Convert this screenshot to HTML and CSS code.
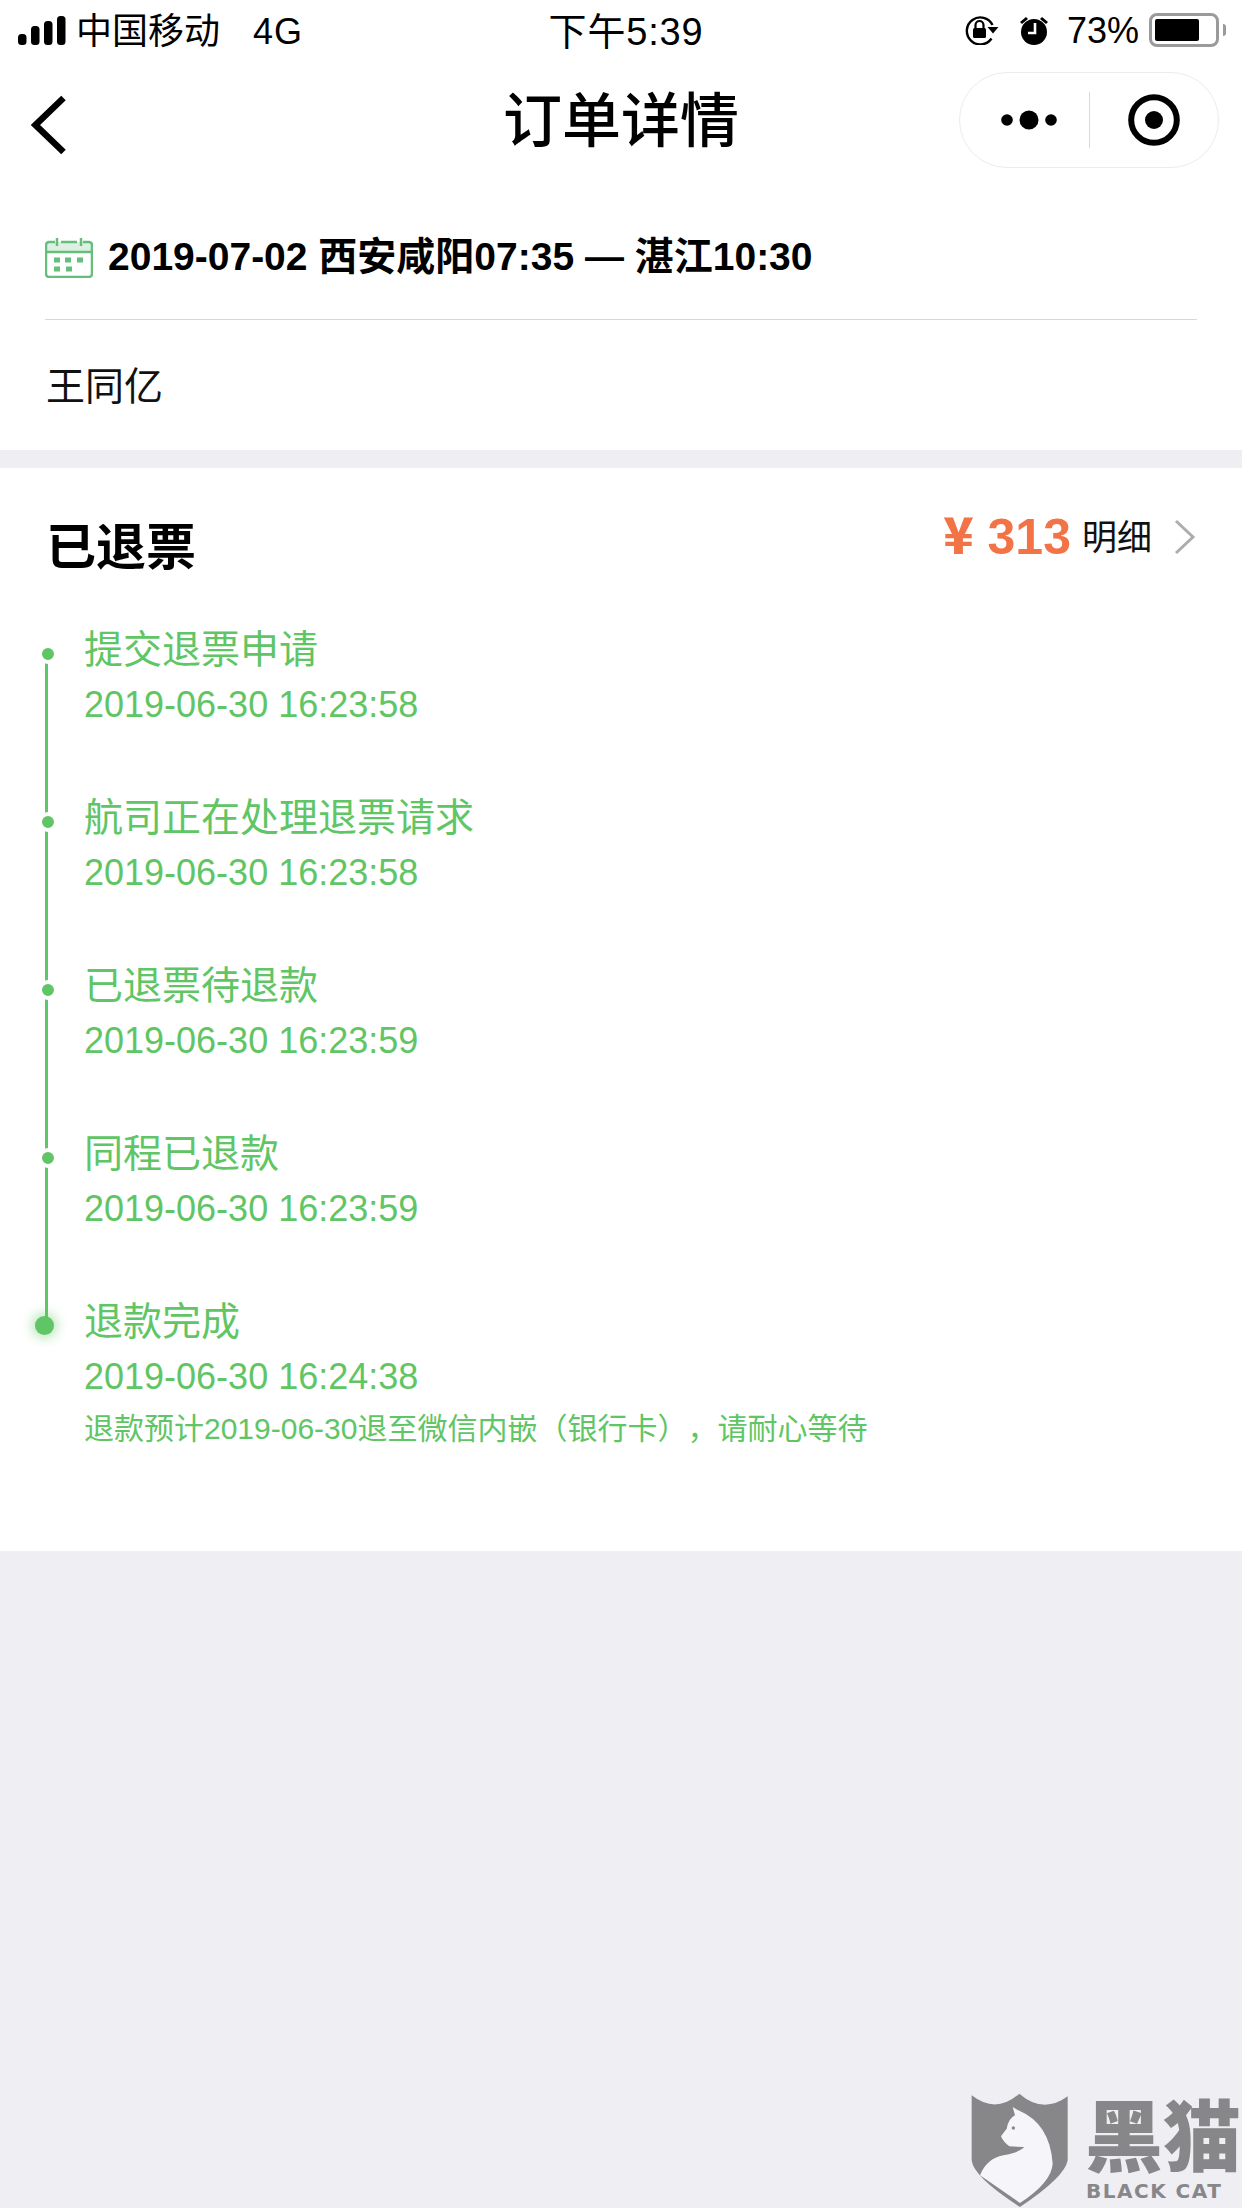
FILE: index.html
```html
<!DOCTYPE html>
<html lang="zh-CN">
<head>
<meta charset="utf-8">
<title>订单详情</title>
<link rel="stylesheet" href="styles.css">
</head>
<body>
<div class="phone">
  <header class="top">
    <div class="status">
      <div class="status-left">
        <svg class="signal" width="48" height="29" viewBox="0 0 48 29"><rect x="0" y="18" width="8.500" height="11" rx="3.500"/><rect x="13" y="10" width="8.500" height="19" rx="3.500"/><rect x="26" y="5" width="8.500" height="24" rx="3.500"/><rect x="39" y="0" width="8.500" height="29" rx="3.500"/></svg>
        <span class="carrier">中国移动</span>
        <span class="net">4G</span>
      </div>
      <div class="clock">下午5:39</div>
      <div class="status-right">
        <svg class="lock" width="34" height="30" viewBox="0 0 34 30"><path d="M26.500 23.500A13.500 13.500 0 1 1 27.500 10" fill="none" stroke="#000" stroke-width="2.400"/><path d="M22.500 12h11l-5.500 6.500z"/><rect x="8" y="13" width="13" height="10" rx="1.500"/><path d="M10.500 13.500V10a4 4 0 0 1 8 0v3.500" fill="none" stroke="#000" stroke-width="2.200"/></svg>
        <svg class="alarm" width="30" height="29" viewBox="0 0 30 29"><circle cx="15" cy="16" r="13"/><path d="M1 6l6-5 2 2-6 5zM29 6l-6-5-2 2 6 5z"/><path d="M16 7v10H9" fill="none" stroke="#fff" stroke-width="2.600"/></svg>
        <span class="pct">73%</span>
        <span class="battery"><span class="battery-fill"></span></span>
        <span class="battery-nub"></span>
      </div>
    </div>
    <nav class="nav">
      <div class="nav-left">
        <svg class="back" width="36" height="60" viewBox="0 0 36 60"><path d="M32.500 3L4.500 30l28 27" fill="none" stroke="#000" stroke-width="6.500"/></svg>
      </div>
      <h1 class="nav-title">订单详情</h1>
      <div class="nav-right">
        <div class="capsule">
          <div class="cap-cell cap-more">
            <svg width="56" height="20" viewBox="0 0 56 20"><circle cx="6" cy="10" r="5.800"/><circle cx="28" cy="10" r="9.500"/><circle cx="50" cy="10" r="5.800"/></svg>
          </div>
          <div class="cap-sep"></div>
          <div class="cap-cell">
            <svg width="52" height="52" viewBox="0 0 52 52"><circle cx="26" cy="26" r="22.800" fill="none" stroke="#000" stroke-width="6"/><circle cx="26" cy="26" r="9"/></svg>
          </div>
        </div>
      </div>
    </nav>
  </header>

  <section class="order">
    <div class="flight">
      <svg class="cal" width="48" height="40" viewBox="0 0 48 40"><path d="M1 14V7a3 3 0 0 1 3-3h40a3 3 0 0 1 3 3v7z" fill="#dcf1e1"/><path d="M10 4H4a3 3 0 0 0-3 3v29a3 3 0 0 0 3 3h40a3 3 0 0 0 3-3V7a3 3 0 0 0-3-3h-6M16 4h16M1 14h46M12 0v8M36 0v8" fill="none" stroke="#64be7c" stroke-width="2.500"/><g fill="#64be7c"><rect x="9" y="19.500" width="6" height="5"/><rect x="20" y="19.500" width="6" height="5"/><rect x="32" y="19.500" width="6" height="5"/><rect x="9" y="28.500" width="6" height="5"/><rect x="21" y="28.500" width="6" height="5"/></g></svg>
      <span class="flight-text">2019-07-02 西安咸阳07:35 — 湛江10:30</span>
    </div>
    <div class="passenger">王同亿</div>
  </section>

  <section class="refund">
    <div class="refund-head">
      <h2 class="refund-title">已退票</h2>
      <div class="price-box">
        <span class="price"><span class="yen">¥</span> 313</span>
        <span class="detail">明细</span>
        <svg class="chev" width="22" height="36" viewBox="0 0 22 36"><path d="M2 2l17 16L2 34" fill="none" stroke="#adadad" stroke-width="3"/></svg>
      </div>
    </div>
    <ol class="timeline">
      <li class="step">
        <div class="step-title">提交退票申请</div>
        <div class="step-time">2019-06-30 16:23:58</div>
      </li>
      <li class="step">
        <div class="step-title">航司正在处理退票请求</div>
        <div class="step-time">2019-06-30 16:23:58</div>
      </li>
      <li class="step">
        <div class="step-title">已退票待退款</div>
        <div class="step-time">2019-06-30 16:23:59</div>
      </li>
      <li class="step">
        <div class="step-title">同程已退款</div>
        <div class="step-time">2019-06-30 16:23:59</div>
      </li>
      <li class="step step-last">
        <div class="step-title">退款完成</div>
        <div class="step-time">2019-06-30 16:24:38</div>
        <div class="step-note">退款预计2019-06-30退至微信内嵌（银行卡），请耐心等待</div>
      </li>
    </ol>
  </section>

  <div class="watermark">
    <svg class="shield" width="100" height="116" viewBox="90 95 300 348"><path d="M95 105Q168 162 238 100Q310 162 383 108V300Q375 350 240 440Q100 350 95 300Z" fill="#87878a"/><path d="M218 140L235 150Q330 190 338 310Q335 365 240 428L120 345Q140 295 190 285Q240 275 253 260L208 258Q190 245 183 228L200 205Q205 175 225 165Z" fill="#f6f6fa"/><circle cx="220" cy="203" r="5" fill="#87878a"/></svg>
    <div class="wm-text">
      <div class="wm-cn">黑猫</div>
      <div class="wm-en">BLACK CAT</div>
    </div>
  </div>
</div>
</body>
</html>
```
FILE: styles.css
```css
*, *::before, *::after { box-sizing: border-box; }
html, body { margin: 0; padding: 0; }
body {
  width: 1242px;
  height: 2208px;
  overflow: hidden;
  background: #eeeef3;
  color: #000;
  font-family: "Liberation Sans", "Noto Sans CJK SC", sans-serif;
  text-spacing-trim: space-all;
}
.phone { position: relative; width: 1242px; height: 2208px; }

.top { background: #fff; }
.status {
  height: 60px;
  display: grid;
  grid-template-columns: 1fr auto 1fr;
  align-items: center;
  font-size: 36px;
  line-height: 44px;
  padding: 0 16px 0 18px;
}
.status-left { display: flex; align-items: center; }
.signal { margin-right: 10px; }
.carrier { padding-top: 4px; }
.net { margin-left: 33px; letter-spacing: 1px; padding-top: 3px; }
.clock { padding: 4px 0 0 8px; font-size: 38px; letter-spacing: .8px; }
.status-right { display: flex; align-items: center; justify-content: flex-end; }
.lock { margin-right: 20px; }
.alarm { margin-right: 18px; }
.pct { margin-right: 10px; padding-top: 2px; }
.battery {
  width: 70px;
  height: 34px;
  border: 3px solid #9a9a9a;
  border-radius: 8px;
  padding: 3px;
  display: block;
}
.battery-fill { display: block; width: 44px; height: 100%; background: #000; border-radius: 2px; }
.battery-nub { width: 3px; height: 12px; background: #9a9a9a; margin-left: 4px; border-radius: 0 3px 3px 0; }

.nav {
  height: 120px;
  display: grid;
  grid-template-columns: 1fr auto 1fr;
  align-items: center;
}
.nav-left { padding-left: 31px; display: flex; padding-top: 10px; }
.nav-title {
  margin: 0 0 6px;
  font-size: 59px;
  font-weight: 500;
  line-height: 70px;
  font-family: "Noto Sans CJK SC", sans-serif;
}
.nav-right { display: flex; justify-content: flex-end; padding-right: 23px; }
.capsule {
  width: 260px;
  height: 96px;
  border: 1px solid #ececec;
  border-radius: 48px;
  display: flex;
  align-items: center;
}
.cap-cell { flex: 1; display: flex; justify-content: center; align-items: center; }
.cap-more { flex: none; width: 129px; padding-left: 8px; }
.cap-sep { width: 1px; height: 56px; background: #d9d9d9; }

.order { background: #fff; padding: 14px 45px 0; }
.flight {
  height: 126px;
  display: flex;
  align-items: center;
  gap: 15px;
  border-bottom: 1px solid #d8d8d8;
}
.cal { margin-top: 2px; }
.flight-text { font-size: 39px; font-weight: 700; white-space: nowrap; margin-bottom: 8px; }
.passenger {
  height: 130px;
  display: flex;
  align-items: center;
  padding: 0 0 4px 1px;
  font-size: 39px;
  color: #111;
}

.refund { margin-top: 18px; height: 1083px; background: #fff; }
.refund-head {
  display: flex;
  justify-content: space-between;
  padding: 37px 46px 0 46px;
  height: 152px;
}
.refund-title { margin: 0; font-size: 50px; font-weight: 700; line-height: 76px; font-family: "Noto Sans CJK SC", sans-serif; }
.price-box { display: flex; align-items: center; height: 60px; margin-top: 1px; }
.price { font-size: 50px; font-weight: 700; color: #f27346; margin-right: 11px; }
.yen { font-family: "Noto Sans CJK SC", sans-serif; font-weight: 900; font-size: 50px; line-height: 50px; }
.detail { font-size: 35px; margin: 0 22px 3px 0; color: #111; }
.chev { display: block; margin-top: 1px; }

.timeline {
  position: relative;
  list-style: none;
  margin: 0;
  padding: 0 0 0 84px;
}
.timeline::before {
  content: "";
  position: absolute;
  left: 45px;
  top: 40px;
  width: 3px;
  height: 665px;
  background: #60c564;
}
.step { position: relative; height: 168px; color: #60c564; }
.step::before {
  content: "";
  position: absolute;
  left: -46px;
  top: 24px;
  width: 20px;
  height: 20px;
  border: 4px solid #fff;
  border-radius: 50%;
  background: #60c564;
}
.step-last::before {
  left: -49px;
  top: 24px;
  width: 19px;
  height: 19px;
  border: 0;
  box-shadow: 0 0 12px 3px rgba(96, 197, 100, .45);
}
.step-title { font-size: 39px; line-height: 59px; }
.step-time { font-size: 36px; line-height: 52px; }
.step-note { font-size: 30px; line-height: 40px; margin-top: 6px; white-space: nowrap; }

.watermark {
  position: absolute;
  right: 3px;
  bottom: 0;
  display: flex;
  align-items: flex-start;
  gap: 15px;
  color: #87878a;
}
.shield { display: block; }
.wm-text { width: 154px; padding-top: 2px; }
.wm-cn { font-family: "Noto Sans CJK SC", sans-serif; font-weight: 900; font-size: 78px; line-height: 76px; white-space: nowrap; }
.wm-en { font-family: "DejaVu Sans", sans-serif; font-weight: 700; font-size: 20px; line-height: 24px; letter-spacing: 1.500px; white-space: nowrap; margin-top: 9px; padding-left: 1px; }
```
